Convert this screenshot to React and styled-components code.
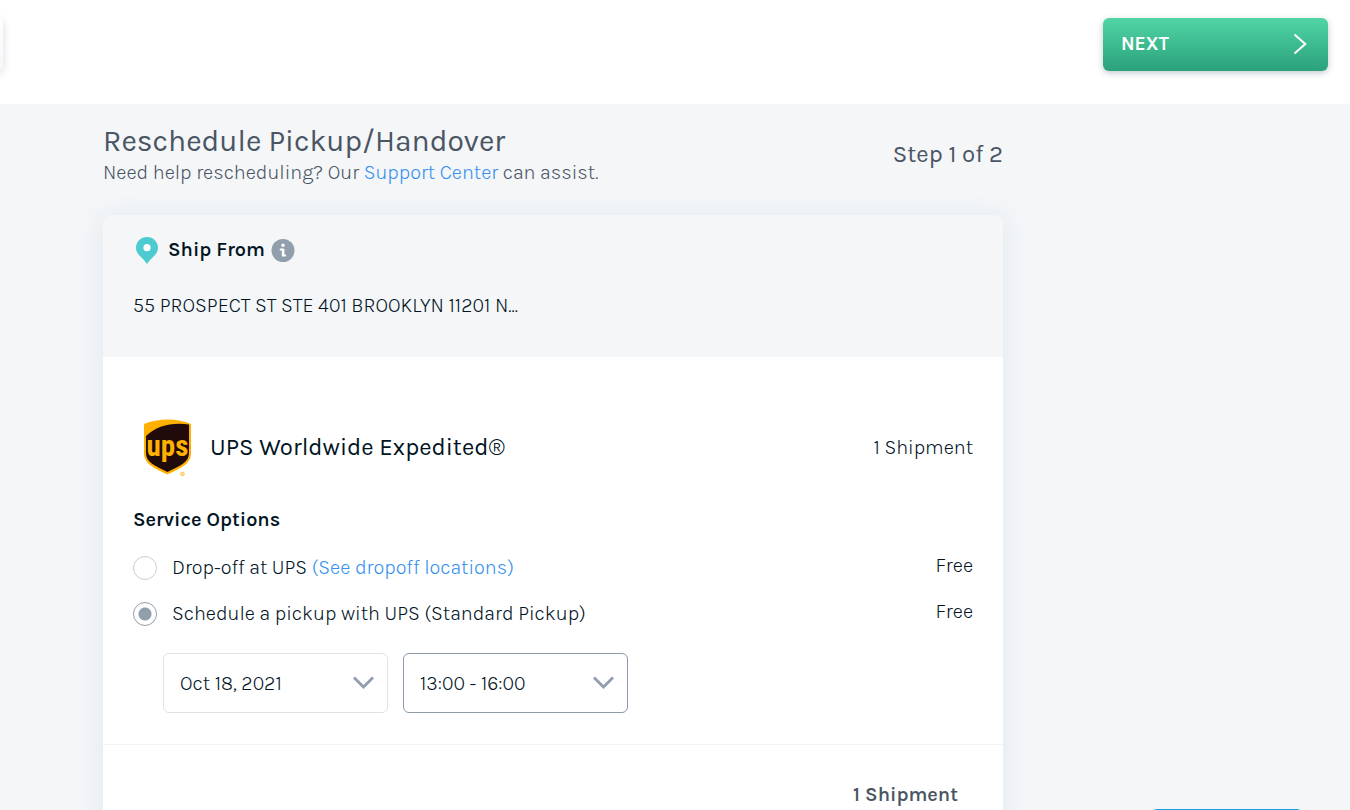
import React, { useState } from 'react'
import styled, { createGlobalStyle } from 'styled-components'

const GlobalStyle = createGlobalStyle`
	* {
		box-sizing: border-box;
	}

	body {
		margin: 0;
		background: #f4f6f8;
		color: #02141f;
		font-family: Karla, Roboto, 'Liberation Sans', sans-serif;
		font-size: 20px;
		font-weight: 325;
		line-height: 24px;
	}

	button,
	select {
		font: inherit;
		color: inherit;
	}
`

const Header = styled.header`
	display: flex;
	align-items: flex-start;
	justify-content: space-between;
	height: 104px;
	padding: 18px 22px 0 0;
	overflow: hidden;
	background: #fff;
`

const NavButton = styled.button`
	display: flex;
	align-items: center;
	justify-content: space-between;
	width: 225px;
	height: 53px;
	padding: 0 21px 2px 18px;
	border: 0;
	border-radius: 6px;
	font-size: 19px;
	font-weight: 700;
	cursor: pointer;
`

const BackButton = styled(NavButton)`
	margin-left: -222px;
	background: linear-gradient(#fff, #f4f6f8);
	color: #4a5563;
	box-shadow: 0 2px 8px rgba(50, 70, 100, 0.2);
`

const NextButton = styled(NavButton)`
	background: linear-gradient(#50d5a5, #2ba17c);
	color: #fff;
	box-shadow: 0 2px 6px rgba(50, 70, 100, 0.3);
`

const Page = styled.div`
	display: grid;
	grid-template-columns: minmax(0, 1fr) 225px;
	gap: 100px;
	padding: 20px 22px 0 103px;
`

const TitleBar = styled.div`
	display: flex;
	align-items: flex-start;
	justify-content: space-between;
	margin-bottom: 27px;
	color: #4a5563;
`

const Title = styled.h1`
	margin: 0;
	font-size: 30px;
	font-weight: 400;
	line-height: 34px;
`

const Help = styled.p`
	margin: 0;
	line-height: 30px;
`

const Link = styled.a`
	color: #3490ee;
	text-decoration: none;
`

const Step = styled.span`
	font-size: 24px;
	font-weight: 400;
	line-height: 60px;
`

const Card = styled.section`
	border-radius: 10px;
	background: #fff;
	box-shadow: 0 4px 24px rgba(170, 200, 215, 0.3);
`

const ShipFrom = styled.div`
	padding: 21px 30px 39px;
	border-radius: 10px 10px 0 0;
	background: #f4f6f8;
`

const ShipFromTitle = styled.h2`
	display: flex;
	align-items: center;
	gap: 6px;
	height: 28px;
	margin: 0 0 30px;
	padding-left: 3px;
	font-size: 20px;
	font-weight: 600;

	span {
		margin-left: 4px;
	}
`

const Address = styled.p`
	margin: 0;
	overflow: hidden;
	text-overflow: ellipsis;
	white-space: nowrap;
`

const Service = styled.div`
	padding: 61px 30px 31px;
	border-bottom: 1px solid #f1f3f5;
`

const Carrier = styled.div`
	display: flex;
	align-items: center;
	gap: 18px;
	height: 60px;
	margin-bottom: 30px;
	padding-left: 11px;
`

const CarrierName = styled.h3`
	flex: 1;
	margin: 0;
	padding-bottom: 2px;
	font-size: 24px;
	font-weight: 400;
`

const Options = styled.fieldset`
	margin: 0;
	padding: 0;
	border: 0;
`

const Legend = styled.legend`
	margin-bottom: 24px;
	padding: 0;
	font-weight: 600;
`

const Option = styled.div`
	display: flex;
	align-items: flex-start;
	margin-bottom: 22px;
`

const Radio = styled.input`
	width: 24px;
	height: 24px;
	margin: 0 15px 0 0;
	appearance: none;
	border: 1px solid #c6ced6;
	border-radius: 50%;
	background: #fff;

	&:checked {
		border-color: #919eab;
		background: radial-gradient(circle, #919eab 6px, #fff 7px);
	}
`

const OptionText = styled.div`
	flex: 1;
`

const Price = styled.span`
	line-height: 20px;
`

const Pickers = styled.div`
	display: flex;
	flex-wrap: wrap;
	gap: 15px;
	margin-top: 27px;
	padding-left: 30px;
`

const SelectBox = styled.div`
	position: relative;
	width: 225px;

	svg {
		position: absolute;
		top: 23px;
		right: 14px;
		pointer-events: none;
	}
`

const Select = styled.select`
	display: block;
	width: 100%;
	height: 60px;
	padding: 2px 44px 0 16px;
	appearance: none;
	border: 1px solid ${({ $active }) => ($active ? '#8d9aa8' : '#dfe3e8')};
	border-radius: 6px;
	background: #fff;
	outline: none;
`

const Summary = styled.div`
	padding: 38px 45px;
	color: #4a5563;
	font-weight: 600;
	text-align: right;
`

const ChatButton = styled.button`
	position: fixed;
	right: 47px;
	bottom: -39px;
	width: 152px;
	height: 40px;
	border: 0;
	border-radius: 6px;
	background: #1a9fe0;
	color: #fff;
`

const ArrowIcon = () => (
	<svg width='14' height='22' viewBox='0 0 14 22' fill='none' aria-hidden='true'>
		<path d='M1.5 1.5L12.3 11L1.5 20.5' stroke='#fff' strokeWidth='2' />
	</svg>
)

const PinIcon = () => (
	<svg width='22' height='27' viewBox='0 0 22 27' aria-hidden='true'>
		<path
			d='M11 0C4.8 0 0 4.8 0 10.8C0 16.5 4.5 19.2 7.2 22.2C8.8 24 10 25.4 11 27C12 25.4 13.2 24 14.8 22.2C17.5 19.2 22 16.5 22 10.8C22 4.8 17.2 0 11 0Z'
			fill='#4dcbd0'
		/>
		<circle cx='11' cy='10.7' r='3.6' fill='#fff' />
	</svg>
)

const InfoIcon = () => (
	<svg width='24' height='24' viewBox='0 0 24 24' aria-hidden='true'>
		<circle cx='12' cy='12.5' r='11.5' fill='#919eab' />
		<circle cx='12' cy='7.2' r='1.7' fill='#fff' />
		<path
			d='M9.5 10.6H12.2Q13.4 10.6 13.4 11.8V16.6H14.2Q15.2 16.6 15.2 17.6T14.2 18.6H12Q10.8 18.6 10.8 17.4V12.6H9.5Q8.6 12.6 8.6 11.6T9.5 10.6Z'
			fill='#fff'
		/>
	</svg>
)

const ChevronIcon = () => (
	<svg width='21' height='14' viewBox='0 0 21 14' fill='none' aria-hidden='true'>
		<path d='M1 1.5L10.5 11L20 1.5' stroke='#919eab' strokeWidth='2.8' />
	</svg>
)

const UpsLogo = () => (
	<svg width='48' height='58' viewBox='0 0 48 58' role='img' aria-label='UPS'>
		<path
			d='M0 5C14-1 34-1 47 5V34C47 45 37 49 23.5 55.5C10 49 0 45 0 34Z'
			fill='#ffb000'
		/>
		<path
			d='M2 17C12 7 28 3 45 5.5V34C45 43.5 36 47 23.5 53C11 47 2 43.5 2 34Z'
			fill='#210b0a'
		/>
		<text
			x='23.5'
			y='37'
			textAnchor='middle'
			fill='#ffb000'
			fontFamily="'Liberation Sans Narrow', 'Roboto Condensed', Roboto, sans-serif"
			fontSize='29'
			fontWeight='700'
		>
			ups
		</text>
		<circle cx='38.5' cy='55' r='1.8' fill='#ffe0a0' stroke='#ffc552' />
	</svg>
)

const App = () => {
	const [option, setOption] = useState('pickup')

	return (
		<>
			<GlobalStyle />
			<Header>
				<BackButton aria-label='Back' />
				<NextButton>
					NEXT
					<ArrowIcon />
				</NextButton>
			</Header>
			<Page>
				<main>
					<TitleBar>
						<div>
							<Title>Reschedule Pickup/Handover</Title>
							<Help>
								Need help rescheduling? Our{' '}
								<Link href='#support'>Support Center</Link> can
								assist.
							</Help>
						</div>
						<Step>Step 1 of 2</Step>
					</TitleBar>
					<Card>
						<ShipFrom>
							<ShipFromTitle>
								<PinIcon />
								<span>Ship From</span>
								<InfoIcon />
							</ShipFromTitle>
							<Address>
								55 PROSPECT ST STE 401 BROOKLYN 11201 N...
							</Address>
						</ShipFrom>
						<Service>
							<Carrier>
								<UpsLogo />
								<CarrierName>UPS Worldwide Expedited®</CarrierName>
								<span>1 Shipment</span>
							</Carrier>
							<Options>
								<Legend>Service Options</Legend>
								<Option>
									<Radio
										type='radio'
										id='dropoff'
										name='service'
										checked={option === 'dropoff'}
										onChange={() => setOption('dropoff')}
									/>
									<OptionText>
										<label htmlFor='dropoff'>
											Drop-off at UPS
										</label>{' '}
										<Link href='#locations'>
											(See dropoff locations)
										</Link>
									</OptionText>
									<Price>Free</Price>
								</Option>
								<Option>
									<Radio
										type='radio'
										id='pickup'
										name='service'
										checked={option === 'pickup'}
										onChange={() => setOption('pickup')}
									/>
									<OptionText>
										<label htmlFor='pickup'>
											Schedule a pickup with UPS (Standard
											Pickup)
										</label>
									</OptionText>
									<Price>Free</Price>
								</Option>
								<Pickers>
									<SelectBox>
										<Select aria-label='Pickup date'>
											<option>Oct 18, 2021</option>
										</Select>
										<ChevronIcon />
									</SelectBox>
									<SelectBox>
										<Select aria-label='Pickup time' $active>
											<option>13:00 - 16:00</option>
										</Select>
										<ChevronIcon />
									</SelectBox>
								</Pickers>
							</Options>
						</Service>
						<Summary>1 Shipment</Summary>
					</Card>
				</main>
			</Page>
			<ChatButton aria-label='Chat' />
		</>
	)
}

export default App
